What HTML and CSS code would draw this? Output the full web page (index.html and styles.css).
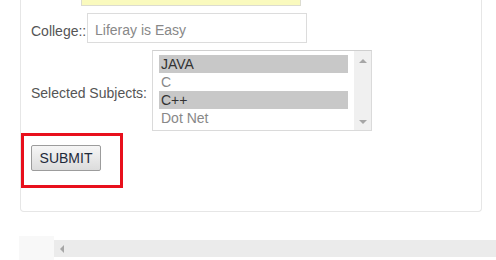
FILE: index.html
```html
<!DOCTYPE html>
<html lang="en">
<head>
    <meta charset="UTF-8">
    <title>Student Form</title>
    <link rel="stylesheet" href="styles.css">
</head>
<body>
    <div class="panel">
        <div class="note"></div>

        <div class="row row-college">
            <label class="label label-college" for="college">College::</label>
            <input type="text" id="college" class="text-input" value="Liferay is Easy">
        </div>

        <div class="row row-subjects">
            <label class="label label-subjects">Selected Subjects:</label>
            <div class="listbox">
                <div class="options">
                    <div class="option selected">JAVA</div>
                    <div class="option">C</div>
                    <div class="option selected">C++</div>
                    <div class="option">Dot Net</div>
                </div>
                <div class="vscroll">
                    <span class="arrow-up"></span>
                    <span class="arrow-down"></span>
                </div>
            </div>
        </div>

        <div class="highlight">
            <button type="submit" class="submit">SUBMIT</button>
        </div>
    </div>

    <div class="hscroll">
        <div class="corner"></div>
        <div class="track"><span class="arrow-left"></span></div>
    </div>
</body>
</html>
```

FILE: styles.css
```css
body {
    margin: 0;
    font-family: 'Liberation Sans', Arial, sans-serif;
    font-size: 14px;
    background: #fff;
}

.panel {
    margin-left: 20px;
    width: 462px;
    box-sizing: border-box;
    border: 1px solid #e6e6e6;
    border-top: none;
    border-radius: 0 0 4px 4px;
    padding: 0 0 23px 10px;
}

.note {
    margin-left: 50px;
    width: 220px;
    height: 6px;
    box-sizing: border-box;
    background: #fafabe;
    border: 1px solid #dcdcd0;
    border-top: none;
}

.row {
    display: flex;
    align-items: flex-start;
}

.row-college {
    margin-top: 7px;
}

.row-subjects {
    margin-top: 7px;
}

.label {
    color: #555;
    line-height: 16px;
}

.label-college {
    margin-top: 10px;
    width: 56px;
}

.label-subjects {
    margin-top: 35px;
    width: 121px;
}

.text-input {
    width: 220px;
    height: 30px;
    box-sizing: border-box;
    margin: 0;
    padding: 3px 7px 0 7px;
    border: 1px solid #dcdcdc;
    font-family: 'Liberation Sans', Arial, sans-serif;
    font-size: 14px;
    color: #888;
}

.listbox {
    display: flex;
    width: 220px;
    height: 81px;
    box-sizing: border-box;
    border: 1px solid #dadada;
    border-top-color: #cfcfcf;
}

.options {
    flex: 1;
    padding: 4px 6px 3px 6px;
}

.option {
    height: 18px;
    line-height: 18px;
    padding-left: 2px;
    color: #888;
}

.option.selected {
    background: #c8c8c8;
    color: #333;
}

.vscroll {
    width: 17px;
    background: #f0f0f0;
    display: flex;
    flex-direction: column;
    justify-content: space-between;
    align-items: center;
    padding: 8px 0 6px 0;
}

.arrow-up, .arrow-down {
    width: 0;
    height: 0;
    border-left: 4px solid transparent;
    border-right: 4px solid transparent;
}

.arrow-up {
    border-bottom: 4px solid #a6a6a6;
}

.arrow-down {
    border-top: 4px solid #a6a6a6;
}

.highlight {
    display: inline-block;
    margin: 2px 0 0 -10px;
    border: 3px solid #e8101c;
    padding: 9px 19px 14px 7px;
}

.submit {
    display: block;
    width: 70px;
    height: 26px;
    margin: 0;
    padding: 0;
    border: 1px solid #9c9c9c;
    border-radius: 2px;
    background: linear-gradient(#f6f6f6, #dcdcdc);
    font-family: 'Liberation Sans', Arial, sans-serif;
    font-size: 14px;
    color: #1e2a3a;
    cursor: pointer;
}

.hscroll {
    display: flex;
    margin-top: 24px;
    margin-left: 19px;
}

.corner {
    width: 35px;
    height: 24px;
    background: #f8f8f8;
}

.track {
    flex: 1;
    height: 17px;
    margin-top: 4px;
    background: #ebebeb;
    display: flex;
    align-items: center;
    padding-left: 6px;
}

.arrow-left {
    width: 0;
    height: 0;
    border-top: 4px solid transparent;
    border-bottom: 4px solid transparent;
    border-right: 4px solid #a6a6a6;
}
```
